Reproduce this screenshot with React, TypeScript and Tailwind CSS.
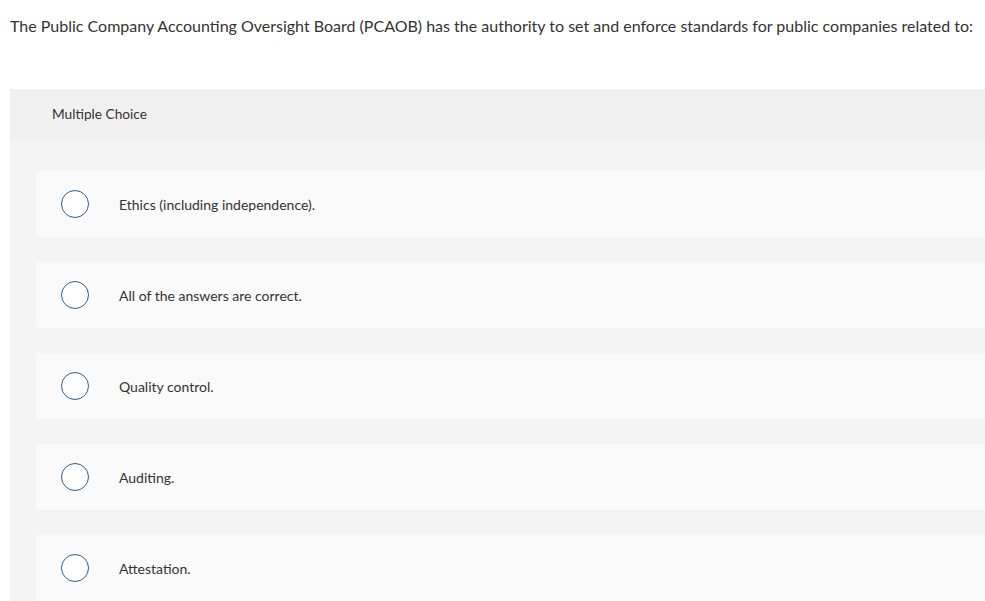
const OPTIONS = [
  'Ethics (including independence).',
  'All of the answers are correct.',
  'Quality control.',
  'Auditing.',
  'Attestation.',
];

export default function App() {
  return (
    <div className="min-h-screen overflow-hidden bg-white font-['Lato','Open_Sans',sans-serif] text-[#333]">
      <p className="ml-[10px] pt-[16px] text-[16px] leading-[20px]">
        The Public Company Accounting Oversight Board (PCAOB) has the authority to set and enforce standards for public companies related to:
      </p>

      <div className="ml-[10px] mt-[53px] bg-[#f4f4f4]">
        <div className="flex h-[50px] items-center bg-[#f0f0f0] pl-[42px] pt-[1px] text-[13.7px]">Multiple Choice</div>
        <ul className="flex flex-col gap-[25px] pl-[26px] pt-[32px] pb-[25px]">
          {OPTIONS.map((opt) => (
            <li key={opt} className="flex h-[66px] items-center rounded-l-[3px] bg-[#fafafa]">
              <span className="ml-[25px] h-[28px] w-[28px] shrink-0 rounded-full border-[1.5px] border-[#2e5d8c] bg-white" />
              <span className="ml-[30px] text-[14px]">{opt}</span>
            </li>
          ))}
        </ul>
      </div>
    </div>
  );
}
